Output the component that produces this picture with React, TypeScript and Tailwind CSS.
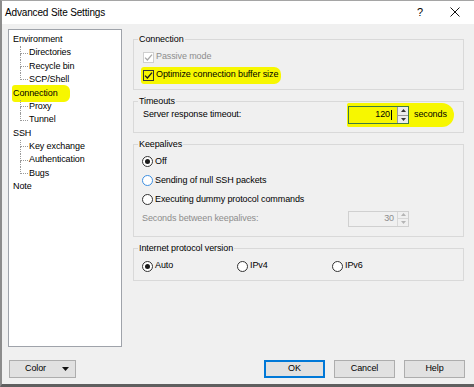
import React from 'react';

type Node = { label: string; children: string[]; marked?: boolean };

const tree: Node[] = [
  { label: 'Environment', children: ['Directories', 'Recycle bin', 'SCP/Shell'] },
  { label: 'Connection', children: ['Proxy', 'Tunnel'], marked: true },
  { label: 'SSH', children: ['Key exchange', 'Authentication', 'Bugs'] },
  { label: 'Note', children: [] },
];

const Tick = ({ color }: { color: string }) => (
  <svg width="9" height="9" viewBox="0 0 9 9">
    <path d="M1 4.6 L3.4 7 L8 1.6" fill="none" stroke={color} strokeWidth="1.3" />
  </svg>
);

const Checkbox = ({ disabled, bg }: { disabled?: boolean; bg?: string }) => (
  <span
    className={`flex h-[11px] w-[11px] shrink-0 items-center justify-center border ${
      disabled ? 'border-[#cfcfcf]' : 'border-[#333333]'
    } ${bg ?? 'bg-white'}`}
  >
    <Tick color={disabled ? '#a8a8a8' : '#1a1a1a'} />
  </span>
);

const Radio = ({ on, hover }: { on?: boolean; hover?: boolean }) => (
  <span
    className={`flex h-[11px] w-[11px] shrink-0 items-center justify-center rounded-full border bg-white ${
      hover ? 'border-[#3d8ee0]' : 'border-[#333333]'
    }`}
  >
    {on && <span className="h-[5px] w-[5px] rounded-full bg-[#1a1a1a]" />}
  </span>
);

const Spinner = ({ disabled }: { disabled?: boolean }) => {
  const c = disabled ? '#b5b5b5' : '#333333';
  return (
    <div className={`flex h-full w-[11px] flex-col border-l ${disabled ? 'border-[#d8d8d8]' : 'border-[#9a9a9a]'}`}>
      <div className={`flex flex-1 items-center justify-center border-b ${disabled ? 'border-[#d8d8d8] bg-[#f0f0f0]' : 'border-[#9a9a9a] bg-[#ececec]'}`}>
        <svg width="5" height="3" viewBox="0 0 5 3"><path d="M0 3 L2.5 0 L5 3 Z" fill={c} /></svg>
      </div>
      <div className={`flex flex-1 items-center justify-center ${disabled ? 'bg-[#f0f0f0]' : 'bg-[#ececec]'}`}>
        <svg width="5" height="3" viewBox="0 0 5 3"><path d="M0 0 L5 0 L2.5 3 Z" fill={c} /></svg>
      </div>
    </div>
  );
};

const Group = ({ title, children, className }: { title: string; children: React.ReactNode; className: string }) => (
  <fieldset className={`w-[331px] border border-[#d9d9d9] ${className}`}>
    <legend className="ml-[4px] px-[1px] leading-[10px]">{title}</legend>
    {children}
  </fieldset>
);

const Btn = ({ children, primary }: { children: React.ReactNode; primary?: boolean }) => (
  <button
    className={`flex h-[18px] w-[61px] items-center justify-center bg-[#e1e1e1] ${
      primary ? 'border-2 border-[#0078d7]' : 'border border-[#adadad]'
    }`}
  >
    {children}
  </button>
);

export default function App() {
  return (
    <div className="flex h-[387px] w-[474px] flex-col overflow-hidden border-b-[3px] border-l-2 border-t border-b-[#5f5f5f] border-l-[#8c8c8c] border-t-[#a5a5a5] bg-[#f0f0f0] font-['Liberation_Sans',Arial,sans-serif] text-[9px] tracking-[-0.1px] text-black">
      {/* title bar */}
      <div className="flex h-[23px] shrink-0 items-center bg-white pb-[1px] pl-[3px]">
        <span className="text-[10px] tracking-[-0.15px]">Advanced Site Settings</span>
        <span className="ml-auto mr-[27px] text-[11px]">?</span>
        <svg className="mr-[14px]" width="10" height="10" viewBox="0 0 10 10">
          <path d="M0.5 0.5 L9.5 9.5 M9.5 0.5 L0.5 9.5" stroke="#111" strokeWidth="1" />
        </svg>
      </div>

      <div className="flex items-start pl-[6px] pt-[5px]">
        {/* tree */}
        <div className="h-[318px] w-[114px] shrink-0 border border-[#9fa3aa] bg-white pt-[3px]">
          {tree.map((n) => (
            <div key={n.label}>
              <div className="flex h-[13.4px] items-center pl-[4px]">
                {n.marked ? (
                  <span className="-ml-[1px] flex h-[17px] items-center rounded-[3px] rounded-r-[6px] bg-[#f7f700] pl-[1px] pr-[12px]">
                    {n.label}
                  </span>
                ) : (
                  n.label
                )}
              </div>
              {n.children.map((c, i) => {
                const last = i === n.children.length - 1;
                return (
                  <div key={c} className="flex h-[13.4px] items-stretch pl-[11px]">
                    <span className="flex w-[8px] flex-col">
                      <span className="flex-1 border-b border-l border-dotted border-[#9a9a9a]" />
                      <span className={`flex-1 ${last ? '' : 'border-l border-dotted border-[#9a9a9a]'}`} />
                    </span>
                    <span className="ml-[1px] flex items-center">{c}</span>
                  </div>
                );
              })}
            </div>
          ))}
        </div>

        {/* settings */}
        <div className="ml-[11px] flex flex-col gap-[6px] pt-[5px]">
          <Group title="Connection" className="pb-[5px] pt-[4px]">
            <div className="flex h-[18px] items-center gap-[2px] pl-[9px] text-[#8d8d8d]">
              <Checkbox disabled />
              <span>Passive mode</span>
            </div>
            <div className="flex h-[18px] items-center pl-[7px]">
              <span className="flex h-[17px] items-center gap-[2px] rounded-[3px] rounded-r-[7px] bg-[#f7f700] pl-[2px] pr-[3px]">
                <Checkbox bg="bg-[#f7f700]" />
                <span>Optimize connection buffer size</span>
              </span>
            </div>
          </Group>

          <Group title="Timeouts" className="pb-[8px]">
            <div className="flex h-[18px] items-center pl-[9px]">
              <span className="w-[204px]">Server response timeout:</span>
              <div className="flex h-[24px] items-center rounded-l-[2px] rounded-r-[14px] bg-[#f7f700] pl-[1px] pr-[7px]">
                <div className="flex h-[18px] w-[61px] border border-[#3e7a45] bg-[#f7f700]">
                  <span className="flex flex-1 items-center justify-end pr-[5px]">
                    120<span className="ml-[1px] h-[10px] w-px bg-black" />
                  </span>
                  <Spinner />
                </div>
                <span className="ml-[5px]">seconds</span>
              </div>
            </div>
          </Group>

          <Group title="Keepalives" className="pb-[8px] pt-[3px]">
            <div className="flex h-[19px] items-center gap-[2px] pl-[8px]">
              <Radio on />
              <span>Off</span>
            </div>
            <div className="flex h-[19px] items-center gap-[2px] pl-[8px]">
              <Radio hover />
              <span>Sending of null SSH packets</span>
            </div>
            <div className="flex h-[19px] items-center gap-[2px] pl-[8px]">
              <Radio />
              <span>Executing dummy protocol commands</span>
            </div>
            <div className="flex h-[19px] items-center pl-[8px] text-[#8d8d8d]">
              <span className="w-[206px]">Seconds between keepalives:</span>
              <div className="flex h-[16px] w-[61px] border border-[#d0d0d0] bg-[#f0f0f0]">
                <span className="flex flex-1 items-center justify-end pr-[3px]">30</span>
                <Spinner disabled />
              </div>
            </div>
          </Group>

          <Group title="Internet protocol version" className="pb-[5px] pt-[4px]">
            <div className="flex h-[18px] items-center pl-[8px]">
              {['Auto', 'IPv4', 'IPv6'].map((v, i) => (
                <div key={v} className="flex w-[95px] items-center gap-[2px]">
                  <Radio on={i === 0} />
                  <span>{v}</span>
                </div>
              ))}
            </div>
          </Group>
        </div>
      </div>

      {/* buttons */}
      <div className="mt-[13px] flex items-center pl-[7px]">
        <button className="flex h-[18px] w-[67px] items-center border border-[#adadad] bg-[#e1e1e1] pl-[15px]">
          <span>Color</span>
          <svg className="ml-[16px]" width="7" height="4" viewBox="0 0 7 4">
            <path d="M0 0 L7 0 L3.5 4 Z" fill="#111" />
          </svg>
        </button>
        <div className="ml-auto mr-[9px] flex gap-[9px]">
          <Btn primary>OK</Btn>
          <Btn>Cancel</Btn>
          <Btn>Help</Btn>
        </div>
      </div>
    </div>
  );
}
